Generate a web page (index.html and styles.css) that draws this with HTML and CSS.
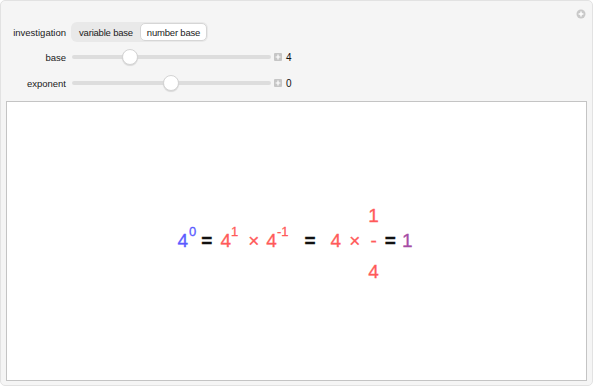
FILE: index.html
```html
<!DOCTYPE html>
<html lang="en">
<head>
    <meta charset="UTF-8">
    <title>Exponent Investigation</title>
    <link rel="stylesheet" href="styles.css">
</head>
<body>
    <div class="panel">
        <svg class="panel-plus" width="10" height="10" viewBox="0 0 10 10">
            <circle cx="5" cy="5" r="4.5" fill="#c9c9c9"/>
            <path d="M5 2.6v4.8M2.6 5h4.8" stroke="#fff" stroke-width="1.4"/>
        </svg>

        <div class="controls">
            <div class="row row-first">
                <span class="label">investigation</span>
                <div class="setter">
                    <span class="seg">variable base</span>
                    <span class="seg seg-on">number base</span>
                </div>
            </div>
            <div class="row">
                <span class="label">base</span>
                <div class="slider">
                    <div class="track"></div>
                    <div class="thumb" style="left: 50px"></div>
                </div>
                <svg class="step" width="8" height="8" viewBox="0 0 8 8">
                    <rect width="8" height="8" rx="1" fill="#c6c6c6"/>
                    <path d="M4 1.6v4.8M1.6 4h4.8" stroke="#fff" stroke-width="1.2"/>
                </svg>
                <span class="value">4</span>
            </div>
            <div class="row">
                <span class="label">exponent</span>
                <div class="slider">
                    <div class="track"></div>
                    <div class="thumb" style="left: 91px"></div>
                </div>
                <svg class="step" width="8" height="8" viewBox="0 0 8 8">
                    <rect width="8" height="8" rx="1" fill="#c6c6c6"/>
                    <path d="M4 1.6v4.8M1.6 4h4.8" stroke="#fff" stroke-width="1.2"/>
                </svg>
                <span class="value">0</span>
            </div>
        </div>

        <div class="output">
            <div class="math">
                <span class="blue">4<sup>0</sup></span>
                <span class="op m-eq1">=</span>
                <span class="red m-p1">4<sup>1</sup></span>
                <span class="red m-x1">&times;</span>
                <span class="red m-p2">4<sup>-1</sup></span>
                <span class="op m-eq2">=</span>
                <span class="red m-four">4</span>
                <span class="red m-x2">&times;</span>
                <span class="frac red">
                    <span class="num">1</span>
                    <span class="bar">-</span>
                    <span class="den">4</span>
                </span>
                <span class="op m-eq3">=</span>
                <span class="purple m-one">1</span>
            </div>
        </div>
    </div>
</body>
</html>
```

FILE: styles.css
```css
body {
    margin: 0;
    font-family: "Liberation Sans", Arial, sans-serif;
    background-color: #ffffff;
}
.panel {
    position: relative;
    width: 593px;
    height: 386px;
    box-sizing: border-box;
    background-color: #f5f5f5;
    border: 1px solid #e2e2e2;
    border-radius: 5px;
    padding: 0 5px;
}
.panel-plus {
    position: absolute;
    left: 575px;
    top: 8px;
}
.controls {
    padding-top: 21px;
}
.row {
    display: flex;
    align-items: center;
    height: 20px;
    margin-top: 5px;
    font-size: 9.5px;
    color: #1a1a1a;
}
.row-first {
    margin-top: 0;
}
.row + .row + .row {
    margin-top: 6px;
}
.label {
    width: 60px;
    text-align: right;
    margin-right: 5px;
}
.setter {
    display: flex;
    height: 20px;
    box-sizing: border-box;
    background-color: #e9e9e9;
    border-radius: 6px;
    padding: 1px;
}
.seg {
    display: flex;
    align-items: center;
    justify-content: center;
    white-space: nowrap;
    box-sizing: border-box;
    height: 18px;
    font-size: 9.5px;
    letter-spacing: -0.2px;
    color: #1a1a1a;
}
.seg:first-child {
    width: 68px;
}
.seg-on {
    width: 67px;
    background-color: #ffffff;
    border: 1px solid #d6d6d6;
    border-radius: 5px;
}
.slider {
    position: relative;
    width: 199px;
    height: 20px;
    margin-left: 1px;
}
.track {
    position: absolute;
    left: 0;
    right: 0;
    top: 8px;
    height: 4px;
    border-radius: 2px;
    background-color: #dddddd;
}
.thumb {
    position: absolute;
    top: 2px;
    width: 16px;
    height: 16px;
    box-sizing: border-box;
    border-radius: 50%;
    background-color: #ffffff;
    border: 1px solid #d4d4d4;
    box-shadow: 0 1px 1px rgba(0, 0, 0, 0.12);
}
.step {
    margin-left: 3px;
}
.value {
    margin-left: 4px;
    font-size: 10px;
    color: #111;
}
.output {
    margin-top: 8px;
    height: 280px;
    box-sizing: border-box;
    background-color: #ffffff;
    border: 1px solid #c4c4c4;
    display: flex;
    align-items: center;
    justify-content: center;
}
.math {
    display: flex;
    align-items: center;
    font-size: 19px;
    line-height: 20px;
    padding-right: 3px;
    -webkit-text-stroke: 0.3px currentColor;
}
.math sup {
    font-size: 13px;
    line-height: 0;
    vertical-align: 11px;
    margin-left: 1px;
}
.blue { color: #5a5aff; }
.red { color: #ff5a5a; }
.purple { color: #a64ca6; }
.op {
    color: #111;
    font-weight: bold;
}
.m-eq1 { margin-left: 5px; }
.m-p1 { margin-left: 8px; }
.m-p1 sup { margin-left: 0; }
.m-x1 { margin-left: 10px; }
.m-p2 { margin-left: 7px; }
.m-p2 sup { margin-left: 0; }
.m-eq2 { margin-left: 16px; }
.m-four { margin-left: 15px; }
.m-x2 { margin-left: 8px; }
.frac {
    margin-left: 8px;
    display: flex;
    flex-direction: column;
    align-items: center;
    padding-top: 6px;
}
.num { margin-bottom: 5px; }
.den { margin-top: 11px; }
.m-eq3 { margin-left: 6px; }
.m-one { margin-left: 6px; }
```
